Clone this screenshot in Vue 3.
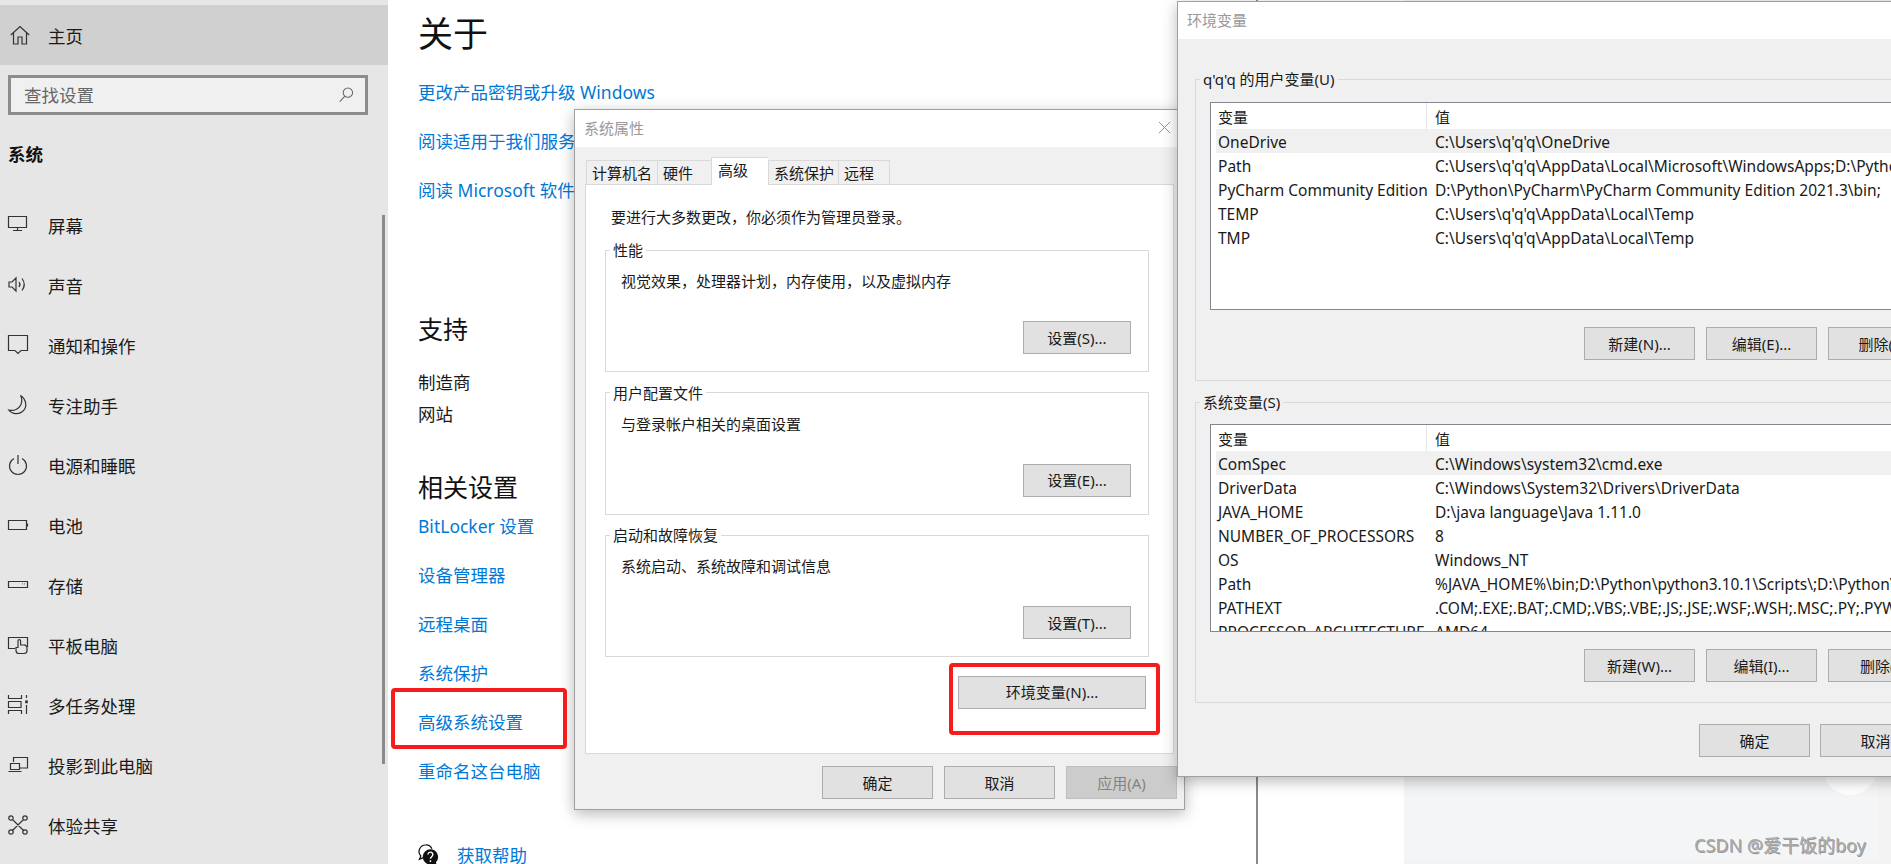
<template>
  <div class="desktop">
    <!-- 设置窗口 -->
    <div class="settings">
      <aside class="sidebar">
        <div class="home">
          <svg class="icon" viewBox="0 0 20 20"><path d="M.8 10 10 1.5 19.2 10M3.5 8v11H8v-7h4v7h4.5V8" /></svg>
          <span>主页</span>
        </div>
        <div class="search">
          <span>查找设置</span>
          <svg class="search-icon" viewBox="0 0 16 16"><path d="M9.5 1a5 5 0 1 1 0 10 5 5 0 0 1 0-10M6 10 .8 15.5" /></svg>
        </div>
        <div class="side-title">系统</div>
        <ul class="nav">
          <li v-for="item in navItems" :key="item.label">
            <svg class="icon" viewBox="0 0 20 20"><path v-for="d in item.icon" :key="d" :d="d" /></svg>
            <span>{{ item.label }}</span>
          </li>
        </ul>
        <div class="side-scroll"></div>
      </aside>

      <main class="about">
        <h1>关于</h1>
        <a class="link first">更改产品密钥或升级 Windows</a>
        <a class="link">阅读适用于我们服务的 Microsoft 服务协议</a>
        <a class="link">阅读 Microsoft 软件许可条款</a>
        <h2 class="support">支持</h2>
        <div class="plain first-plain">制造商</div>
        <div class="plain">网站</div>
        <h2 class="related">相关设置</h2>
        <a class="link tight">BitLocker 设置</a>
        <a class="link">设备管理器</a>
        <a class="link">远程桌面</a>
        <a class="link">系统保护</a>
        <a class="link">高级系统设置</a>
        <a class="link">重命名这台电脑</a>
        <div class="help">
          <svg viewBox="0 0 22 24" class="help-icon">
            <path class="bubble" d="M8 1a6.8 6.8 0 0 0-5 11.5L1.5 16l4-1.8" />
            <path class="bubble" d="M8 1a6.8 6.8 0 0 1 6.5 4" />
            <path class="bubble-fill" d="M13 5.500a8 8 0 0 0 0 16c1 0 2-.2 2.800-.5l4 2.500-1-4.500a8 8 0 0 0-5.800-13.500z" />
            <path class="question" d="M10.500 11a2.500 2.500 0 1 1 4 2c-1 .8-1.500 1.200-1.500 2.500M13 17v1.800" />
          </svg>
          <a class="link-text">获取帮助</a>
        </div>
      </main>
    </div>

    <!-- 后面的网页 -->
    <div class="web">
      <div class="web-panel"><div class="web-circle"></div></div>
    </div>
    <div class="watermark">CSDN @爱干饭的boy</div>

    <!-- 系统属性 -->
    <div class="win sys-win">
      <div class="win-title">
        <span>系统属性</span>
        <svg class="close" viewBox="0 0 14 14"><path d="M1 1l12 12M13 1 1 13" /></svg>
      </div>
      <div class="tabs">
        <div
          v-for="tab in tabs"
          :key="tab.name"
          class="tab"
          :class="{ active: tab.name === '高级' }"
          :style="{ width: tab.width + 'px' }"
        >{{ tab.name }}</div>
      </div>
      <div class="page">
        <p class="notice">要进行大多数更改，你必须作为管理员登录。</p>
        <fieldset v-for="group in sysGroups" :key="group.title" class="group">
          <legend>{{ group.title }}</legend>
          <p>{{ group.text }}</p>
          <button class="btn">{{ group.button }}</button>
        </fieldset>
        <button class="btn env-btn">环境变量(N)...</button>
      </div>
      <div class="win-foot">
        <button class="btn wide">确定</button>
        <button class="btn wide">取消</button>
        <button class="btn wide off">应用(A)</button>
      </div>
    </div>

    <!-- 环境变量 -->
    <div class="win env-win">
      <div class="win-title env-title"><span>环境变量</span></div>
      <div class="env-body">
        <fieldset class="env-group">
          <legend>q'q'q 的用户变量(U)</legend>
          <div class="list">
            <div class="list-head"><span>变量</span><span>值</span></div>
            <div v-for="(row, i) in userVars" :key="row[0]" class="list-row" :class="{ hot: i === 0 }">
              <span>{{ row[0] }}</span><span>{{ row[1] }}</span>
            </div>
          </div>
          <div class="env-btns">
            <button class="btn wide">新建(N)...</button>
            <button class="btn wide">编辑(E)...</button>
            <button class="btn wide">删除(D)</button>
          </div>
        </fieldset>
        <fieldset class="env-group second">
          <legend>系统变量(S)</legend>
          <div class="list">
            <div class="list-head"><span>变量</span><span>值</span></div>
            <div v-for="(row, i) in systemVars" :key="row[0] + i" class="list-row" :class="{ hot: i === 0 }">
              <span>{{ row[0] }}</span><span>{{ row[1] }}</span>
            </div>
          </div>
          <div class="env-btns">
            <button class="btn wide">新建(W)...</button>
            <button class="btn wide">编辑(I)...</button>
            <button class="btn wide">删除(L)</button>
          </div>
        </fieldset>
        <div class="env-foot">
          <button class="btn wide">确定</button>
          <button class="btn wide">取消</button>
        </div>
      </div>
    </div>

    <!-- 红框标注 -->
    <div class="mark mark-link"></div>
    <div class="mark mark-env"></div>
  </div>
</template>

<script setup>
const navItems = [
  { label: '屏幕', icon: ['M.5 1.500h18v11H.5zM9.500 12.500v2.500M5 15.500h9'] },
  { label: '声音', icon: ['M1 7h3l4-4v13l-4-4H1zM11 7q2 2.500 0 5M14 3.500q4.500 6 0 12'] },
  { label: '通知和操作', icon: ['M.5.5h19v15H13l-3 3-3-3H.5z'] },
  { label: '专注助手', icon: ['M12.500 .5C18 4 20 12 14.500 16.500 10.500 20 3.500 19 .8 15 6 16.500 11 14 13 9.500 14 6.500 14 3 12.500 .5z'] },
  { label: '电源和睡眠', icon: ['M6 3.500a8.500 8.500 0 1 0 8 0M10 0v9'] },
  { label: '电池', icon: ['M.5 5.500h18v9H.5zM19.500 8.500v3'] },
  { label: '存储', icon: ['M.5 6.500h19v6H.5zM14 8.800h.6M16 8.800h.6'] },
  { label: '平板电脑', icon: ['M7 13.500H.5V2.500h19V12M11 18.500c-2 0-3-1-3-3v-3h2V6a1.300 1.300 0 0 1 2.600 0v4h3a3 3 0 0 1 3.400 3v2.500a3 3 0 0 1-3 3z'] },
  { label: '多任务处理', icon: ['M.5 0v3.500h13V0M.5 6.500h12.500v6H.5zM.5 19v-3.500h13V19M18.500 0v3M18.500 5.500v1.500M18.500 10v9', 'M17.800 6.200h1.400v1.400h-1.400z'] },
  { label: '投影到此电脑', icon: ['M5.500 7V2.500h14V13H12M2.500 8.500h9v6h-9zM.5 16.500h13'] },
  { label: '体验共享', icon: ['M3 .8a2.200 2.200 0 1 1 0 4.400 2.200 2.200 0 0 1 0-4.400M17 .8a2.200 2.200 0 1 1 0 4.400 2.200 2.200 0 0 1 0-4.400M3 14.800a2.200 2.200 0 1 1 0 4.400 2.200 2.200 0 0 1 0-4.400M17 14.800a2.200 2.200 0 1 1 0 4.400 2.200 2.200 0 0 1 0-4.400M4.500 4.500l11 11M15.500 4.500l-11 11'] }
];

const tabs = [
  { name: '计算机名', width: 71 },
  { name: '硬件', width: 54 },
  { name: '高级', width: 57 },
  { name: '系统保护', width: 70 },
  { name: '远程', width: 52 }
];

const sysGroups = [
  { title: '性能', text: '视觉效果，处理器计划，内存使用，以及虚拟内存', button: '设置(S)...' },
  { title: '用户配置文件', text: '与登录帐户相关的桌面设置', button: '设置(E)...' },
  { title: '启动和故障恢复', text: '系统启动、系统故障和调试信息', button: '设置(T)...' }
];

const userVars = [
  ['OneDrive', "C:\\Users\\q'q'q\\OneDrive"],
  ['Path', "C:\\Users\\q'q'q\\AppData\\Local\\Microsoft\\WindowsApps;D:\\Python\\PyCharm"],
  ['PyCharm Community Edition', 'D:\\Python\\PyCharm\\PyCharm Community Edition 2021.3\\bin;'],
  ['TEMP', "C:\\Users\\q'q'q\\AppData\\Local\\Temp"],
  ['TMP', "C:\\Users\\q'q'q\\AppData\\Local\\Temp"]
];

const systemVars = [
  ['ComSpec', 'C:\\Windows\\system32\\cmd.exe'],
  ['DriverData', 'C:\\Windows\\System32\\Drivers\\DriverData'],
  ['JAVA_HOME', 'D:\\java language\\Java 1.11.0'],
  ['NUMBER_OF_PROCESSORS', '8'],
  ['OS', 'Windows_NT'],
  ['Path', '%JAVA_HOME%\\bin;D:\\Python\\python3.10.1\\Scripts\\;D:\\Python\\python3.10.1\\'],
  ['PATHEXT', '.COM;.EXE;.BAT;.CMD;.VBS;.VBE;.JS;.JSE;.WSF;.WSH;.MSC;.PY;.PYW'],
  ['PROCESSOR_ARCHITECTURE', 'AMD64']
];
</script>

<style>
html,
body {
  margin: 0;
  background: #fff;
}
</style>

<style scoped>
.desktop {
  position: relative;
  width: 1891px;
  height: 864px;
  overflow: hidden;
  background: #fff;
  font-family: "Noto Sans", "Noto Sans CJK SC", sans-serif;
  color: #1a1a1a;
}

/* 设置窗口 */
.settings {
  display: flex;
  width: 1256px;
  height: 864px;
}

.sidebar {
  position: relative;
  width: 388px;
  flex: none;
  padding-top: 5px;
  box-sizing: border-box;
  background: #e6e6e6;
  font-size: 17.5px;
}

.home {
  display: flex;
  align-items: center;
  height: 60px;
  padding-left: 10px;
  gap: 18px;
  background: #d0d0d0;
}

.icon {
  width: 20px;
  height: 20px;
  flex: none;
  fill: none;
  stroke: #333;
  stroke-width: 1.2;
  overflow: visible;
}

.search {
  display: flex;
  align-items: center;
  justify-content: space-between;
  height: 40px;
  margin: 10px 20px 0 8px;
  padding: 0 11px 2px 13px;
  box-sizing: border-box;
  border: 3px solid #8c8c8c;
  background: #f0f0f0;
  color: #666;
}

.search-icon {
  width: 15px;
  height: 15px;
  fill: none;
  stroke: #666;
  stroke-width: 1.1;
}

.side-title {
  margin: 24px 0 0 8px;
  line-height: 30px;
  font-weight: 700;
  color: #111;
}

.nav {
  list-style: none;
  margin: 26px 0 0;
  padding: 0 0 0 8px;
}

.nav li {
  display: flex;
  align-items: center;
  height: 60px;
  gap: 20px;
}

.side-scroll {
  position: absolute;
  top: 215px;
  left: 382px;
  width: 3px;
  height: 549px;
  background: #8a8a8a;
}

.about {
  flex: 1;
  padding-left: 30px;
  font-size: 17.5px;
}

.about h1 {
  margin: 10px 0 0;
  font-size: 35px;
  font-weight: 400;
  line-height: 48px;
  color: #111;
}

.about h2 {
  margin: 0;
  font-size: 25px;
  font-weight: 400;
  line-height: 34px;
  color: #111;
}

.support {
  padding-top: 110px;
}

.related {
  padding-top: 44px;
}

.link,
.plain {
  display: block;
  line-height: 24px;
  margin-top: 25px;
}

.link,
.link-text {
  color: #0078d7;
}

.link.first {
  margin-top: 22px;
}

.link.tight {
  margin-top: 10px;
}

.first-plain {
  margin-top: 24px;
}

.plain + .plain {
  margin-top: 8px;
}

.help {
  display: flex;
  align-items: center;
  gap: 18px;
  margin-top: 60px;
  line-height: 24px;
}

.help-icon {
  width: 21px;
  height: 23px;
  flex: none;
}

.bubble {
  fill: none;
  stroke: #111;
  stroke-width: 1.3;
}

.bubble-fill {
  fill: #111;
}

.question {
  fill: none;
  stroke: #fff;
  stroke-width: 1.5;
}

/* 后面的网页 */
.web {
  position: absolute;
  top: 0;
  left: 1256px;
  width: 635px;
  height: 864px;
  box-sizing: border-box;
  border-left: 2px solid #8a8a8a;
  padding-left: 146px;
  background: #f3f3f3;
}

.web::before {
  content: "";
  position: absolute;
  left: 0;
  top: 0;
  width: 146px;
  height: 864px;
  background: #fff;
}

.web-panel {
  position: relative;
  width: 474px;
  height: 860px;
  background: #f4f5f7;
  overflow: hidden;
}

.web-circle {
  position: absolute;
  top: 741px;
  left: 419px;
  width: 54px;
  height: 54px;
  border-radius: 50%;
  background: #fff;
}

.watermark {
  position: absolute;
  left: 1694px;
  top: 833px;
  font-size: 18px;
  line-height: 24px;
  white-space: nowrap;
  color: #aaa;
  text-shadow: 1px 1px 0 #999, -1px 0 0 #fff;
}

/* 窗口通用 */
.win {
  position: absolute;
  box-sizing: border-box;
  border: 1px solid #a0a0a0;
  background: #f0f0f0;
  box-shadow: 0 4px 14px rgba(0, 0, 0, 0.28);
  font-size: 15px;
  color: #1a1a1a;
}

.win-title {
  display: flex;
  align-items: center;
  justify-content: space-between;
  height: 37px;
  box-sizing: border-box;
  padding: 0 13px 2px 9px;
  background: #fff;
  color: #999;
}

.close {
  width: 13px;
  height: 13px;
  fill: none;
  stroke: #8a8a8a;
  stroke-width: 1;
}

.btn {
  display: block;
  width: 108px;
  height: 33px;
  padding: 0;
  border: 1.5px solid #adadad;
  background: #e1e1e1;
  font: inherit;
  line-height: 28px;
  color: #1a1a1a;
}

.btn.wide {
  width: 111px;
}

.btn.off {
  background: #cccccc;
  border-color: #bfbfbf;
  color: #838383;
}

/* 系统属性 */
.sys-win {
  left: 574px;
  top: 109px;
  width: 611px;
  height: 701px;
}

.tabs {
  display: flex;
  align-items: flex-end;
  height: 37px;
  padding-left: 11px;
}

.tab {
  height: 25px;
  box-sizing: border-box;
  margin-bottom: -1px;
  padding-left: 5px;
  border: 1px solid #d9d9d9;
  border-right: 0;
  background: #f0f0f0;
  line-height: 24px;
}

.tab.active {
  position: relative;
  z-index: 1;
  height: 28px;
  padding-left: 6px;
  border-bottom: 0;
  background: #fff;
  line-height: 24px;
}

.tab:last-child {
  border-right: 1px solid #d9d9d9;
}

.page {
  display: flex;
  flex-direction: column;
  height: 570px;
  margin: 0 10px;
  box-sizing: border-box;
  padding: 22px 0 0 19px;
  border: 1px solid #d9d9d9;
  background: #fff;
}

.notice {
  margin: 0 0 13px 6px;
  line-height: 20px;
}

.group {
  display: flex;
  flex-direction: column;
  width: 544px;
  box-sizing: border-box;
  margin: 0 0 10.5px;
  padding: 0 17px 17px 15px;
  border: 1px solid #d9d9d9;
}

.group legend {
  margin-left: -11px;
  padding: 0 3px;
  line-height: 20px;
}

.env-group legend {
  margin-left: -10px;
  padding: 0 3px;
  line-height: 20px;
}

.group p {
  margin: 11px 0 30px;
  line-height: 20px;
}

.group .btn {
  align-self: flex-end;
}

.env-btn {
  width: 188px;
  margin: 8px 0 0 353px;
}

.win-foot {
  display: flex;
  justify-content: flex-end;
  gap: 11px;
  padding: 12px 7px 0 0;
}

/* 环境变量 */
.env-win {
  left: 1177px;
  top: 1px;
  width: 798px;
  height: 776px;
}

.env-body {
  padding: 30px 16px 0 17px;
}

.env-group {
  margin: 0;
  padding: 0 16px 20px 14px;
  border: 1px solid #d9d9d9;
  min-width: 0;
}

.env-group.second {
  margin-top: 11px;
  padding-bottom: 20px;
}

.list {
  height: 208px;
  box-sizing: border-box;
  margin-top: 13px;
  border: 1px solid #828790;
  background: #fff;
  overflow: hidden;
}

.second .list {
  margin-top: 12px;
}

.list-head,
.list-row {
  display: grid;
  grid-template-columns: 217px 1fr;
  margin-left: 5px;
  white-space: nowrap;
}

.list-head {
  height: 26px;
  line-height: 28px;
}

.list-head span,
.list-row span {
  padding-left: 2px;
  overflow: hidden;
}

.list-head span:first-child {
  border-right: 1px solid #e5e5e5;
  margin-right: 6px;
}

.list-row {
  height: 24px;
  font-size: 15.5px;
  line-height: 26px;
}

.list-row.hot {
  background: #f0f0f0;
}

.env-btns {
  display: flex;
  gap: 11px;
  margin: 17px 0 0 374px;
}

.env-foot {
  display: flex;
  gap: 10px;
  margin: 21px 0 0 504px;
}

/* 红框 */
.mark {
  position: absolute;
  box-sizing: border-box;
  border: 4px solid #f61c1c;
  border-radius: 4px;
}

.mark-link {
  left: 391px;
  top: 688px;
  width: 176px;
  height: 61px;
}

.mark-env {
  left: 949px;
  top: 663px;
  width: 211px;
  height: 72px;
}
</style>
